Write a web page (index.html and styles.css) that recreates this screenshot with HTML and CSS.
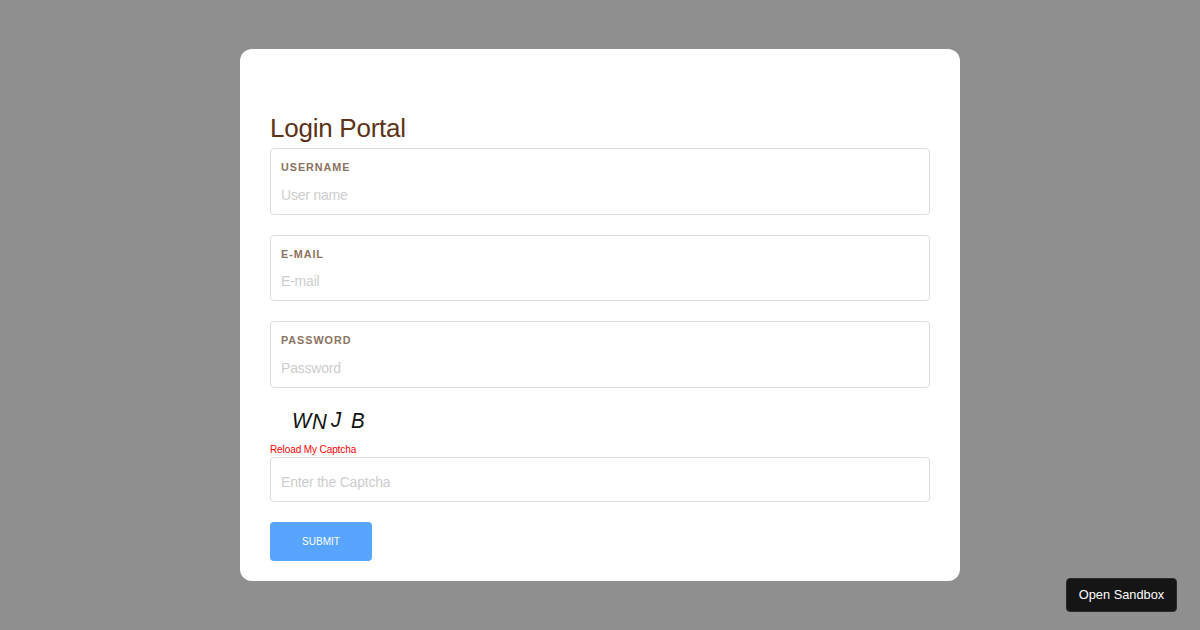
FILE: index.html
```html
<!doctype html>
<html lang="en">
<head>
    <meta charset="UTF-8">
    <title>Login Portal</title>
    <link rel="stylesheet" href="styles.css">
</head>
<body>
    <div class="overlay">
        <div class="card">
            <h1>Login Portal</h1>
            <form class="login-form">
                <div class="field">
                    <label>Username</label>
                    <div class="placeholder">User name</div>
                </div>
                <div class="field field-short">
                    <label>E-mail</label>
                    <div class="placeholder">E-mail</div>
                </div>
                <div class="field">
                    <label>Password</label>
                    <div class="placeholder">Password</div>
                </div>
                <div class="captcha">
                    <div class="captcha-text"><span>W</span><span class="low">N</span><span class="high">J</span><span class="gap">B</span></div>
                    <a class="reload">Reload My Captcha</a>
                    <div class="captcha-input">Enter the Captcha</div>
                </div>
                <div class="submit">SUBMIT</div>
            </form>
        </div>
    </div>
    <div class="sandbox">Open Sandbox</div>
</body>
</html>
```

FILE: styles.css
```css
* {
    box-sizing: border-box;
}
body {
    margin: 0;
    font-family: "Liberation Sans", Arial, sans-serif;
    background: #8f8f8f;
}
.overlay {
    height: 630px;
    display: flex;
    align-items: center;
    justify-content: center;
}
.card {
    width: 720px;
    height: 532px;
    padding: 63px 30px 20px;
    background: #fff;
    border-radius: 12px;
}
h1 {
    margin: 0;
    height: 36px;
    font-size: 26px;
    line-height: 32px;
    letter-spacing: -0.25px;
    font-weight: 400;
    color: #5c3317;
}
.field {
    height: 67px;
    margin-bottom: 20px;
    padding: 12px 10px 0;
    border: 1px solid #dcdcdc;
    border-radius: 4px;
}
.field-short {
    height: 66px;
}
.field label {
    display: block;
    font-size: 10.8px;
    line-height: 13px;
    font-weight: 700;
    letter-spacing: 0.95px;
    text-transform: uppercase;
    color: #8b7260;
}
.placeholder {
    margin-top: 12px;
    font-size: 14px;
    line-height: 18px;
    letter-spacing: -0.2px;
    color: #cdcdcd;
}
.field-short .placeholder {
    margin-top: 11px;
}
.captcha-text {
    display: flex;
    height: 35px;
    padding-left: 22px;
    font-size: 22px;
    line-height: 26px;
    font-style: italic;
    color: #111;
}
.captcha-text span {
    width: 20px;
    transform: scaleX(0.93);
    transform-origin: left;
}
.captcha-text .low {
    transform: translateY(1px) scaleX(0.93);
}
.captcha-text .high {
    width: 11px;
    margin-left: -1px;
    transform: translateY(-1px) scaleX(0.93);
}
.captcha-text .gap {
    margin-left: 9px;
}
.reload {
    display: block;
    height: 29px;
    margin-bottom: -15px;
    font-size: 10px;
    line-height: 13px;
    letter-spacing: -0.1px;
    color: #f00;
}
.captcha-input {
    height: 45px;
    margin-bottom: 20px;
    padding: 0 10px;
    border: 1px solid #dcdcdc;
    border-radius: 4px;
    font-size: 14px;
    line-height: 48px;
    letter-spacing: -0.2px;
    color: #cdcdcd;
}
.submit {
    width: 102px;
    height: 39px;
    background: #57a5ff;
    border-radius: 4px;
    color: #fff;
    font-size: 10px;
    line-height: 39px;
    text-align: center;
}
.sandbox {
    position: fixed;
    right: 23px;
    bottom: 18px;
    width: 111px;
    height: 34px;
    background: #151515;
    border: 1px solid #2b2b2b;
    border-radius: 4px;
    color: #fff;
    font-size: 12.8px;
    line-height: 32px;
    text-align: center;
}
```
